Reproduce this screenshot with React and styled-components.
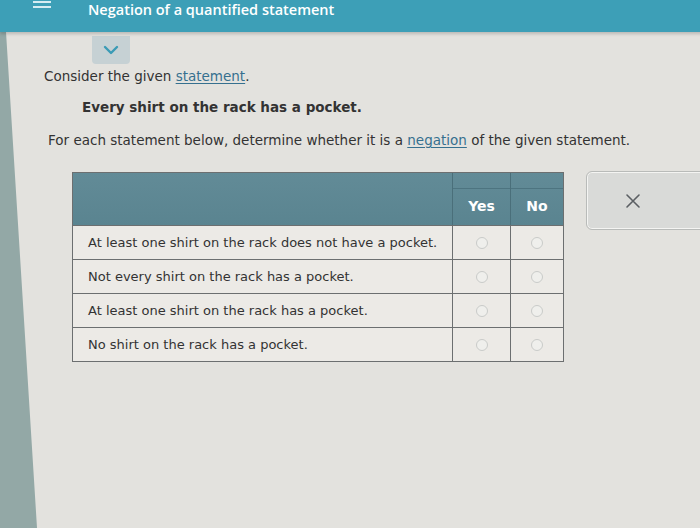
import React from "react";
import styled, { createGlobalStyle } from "styled-components";

const GlobalStyle = createGlobalStyle`
  html, body {
    margin: 0;
    padding: 0;
    background: #e3e2de;
  }
`;

const Page = styled.div`
  width: 700px;
  height: 528px;
  display: grid;
  grid-template-rows: 32px 1fr;
  background: #e3e2de;
  font-family: "DejaVu Sans", Verdana, sans-serif;
  color: #333;
  overflow: hidden;
`;

const Header = styled.div`
  display: flex;
  align-items: flex-start;
  background: #3d9fb7;
  box-shadow: 0 2px 3px rgba(0, 0, 0, 0.18);
  position: relative;
  z-index: 1;
`;

const Menu = styled.div`
  width: 18px;
  margin: 0 0 0 33px;
  display: flex;
  flex-direction: column;
  gap: 3px;
  padding-top: 1px;

  span {
    display: block;
    height: 2px;
    background: #d6edf3;
  }
`;

const Title = styled.h1`
  margin: 0 0 0 37px;
  font-family: "Open Sans", sans-serif;
  font-size: 14.5px;
  font-weight: 600;
  color: #fff;
  line-height: 20px;
`;

const Body = styled.div`
  display: flex;
`;

const Strip = styled.div`
  width: 38px;
  flex: none;
  background: #93a8a6;
  clip-path: polygon(0 0, 6px 0, 37px 100%, 0 100%);
`;

const Content = styled.div`
  flex: 1;
  padding-left: 6px;
`;

const Tab = styled.div`
  width: 38px;
  height: 28px;
  margin: 4px 0 0 48px;
  background: #c6d1d4;
  border-radius: 0 0 4px 4px;
  display: flex;
  align-items: center;
  justify-content: center;
`;

const Line = styled.p`
  margin: ${({ $top }) => $top || 0}px 0 0 ${({ $indent }) => $indent || 0}px;
  font-size: 13.5px;
  font-weight: ${({ $bold }) => ($bold ? 700 : 400)};
  line-height: 20px;
`;

const Link = styled.span`
  color: #36708f;
  text-decoration: underline;
  text-underline-offset: 2px;
`;

const Stack = styled.div`
  display: flex;
  flex-direction: column;
  gap: 11px;
  margin-top: 2px;
`;

const Work = styled.div`
  display: flex;
  align-items: flex-start;
  margin-top: 22px;
`;

const Table = styled.div`
  margin-left: 28px;
  display: grid;
  grid-template-columns: 380px 58px 52px;
  border: 1px solid #6c6f70;
  background: #eceae6;
`;

const HeadBlank = styled.div`
  height: 52px;
  background: linear-gradient(#628b97, #5a8490);
  border-right: 1px solid #4a6f7a;
`;

const HeadCell = styled.div`
  height: 52px;
  background: linear-gradient(#628b97, #5a8490);
  border-right: ${({ $last }) => ($last ? "none" : "1px solid #4a6f7a")};
  display: flex;
  flex-direction: column;
`;

const Cap = styled.div`
  height: 15px;
  border-bottom: 1px solid #4d7480;
`;

const HeadLabel = styled.div`
  flex: 1;
  display: flex;
  align-items: center;
  justify-content: center;
  color: #fff;
  font-weight: 700;
  font-size: 14px;
  padding-bottom: 3px;
`;

const Cell = styled.div`
  height: 33px;
  border-top: 1px solid #6c6f70;
  border-right: ${({ $last }) => ($last ? "none" : "1px solid #6c6f70")};
  display: flex;
  align-items: center;
  justify-content: ${({ $center }) => ($center ? "center" : "flex-start")};
  padding-left: ${({ $center }) => ($center ? 0 : 15)}px;
  font-size: 13px;
  color: #333;
`;

const Radio = styled.span`
  width: 10px;
  height: 10px;
  border-radius: 50%;
  border: 1px solid #c9cbc9;
  background: #efefec;
`;

const CloseBox = styled.div`
  margin-left: 23px;
  width: 130px;
  height: 57px;
  border: 1px solid #f4f4f2;
  outline: 1px solid #b9bbb9;
  border-radius: 5px;
  background: #d9dad8;
  display: flex;
  align-items: center;
  padding-left: 37px;
  box-sizing: border-box;
`;

const rows = [
  "At least one shirt on the rack does not have a pocket.",
  "Not every shirt on the rack has a pocket.",
  "At least one shirt on the rack has a pocket.",
  "No shirt on the rack has a pocket.",
];

const App = () => {
  return (
    <Page>
      <GlobalStyle />
      <Header>
        <Menu>
          <span />
          <span />
        </Menu>
        <Title>Negation of a quantified statement</Title>
      </Header>
      <Body>
        <Strip />
        <Content>
          <Tab>
            <svg width="16" height="10" viewBox="0 0 16 10">
              <path d="M2 2l6 6 6-6" fill="none" stroke="#3a9bb6" strokeWidth="2.4" strokeLinecap="round" strokeLinejoin="round" />
            </svg>
          </Tab>
          <Stack>
            <Line>
              Consider the given <Link>statement</Link>.
            </Line>
            <Line $indent={38} $bold>
              Every shirt on the rack has a pocket.
            </Line>
            <Line $indent={4} $top={2}>
              For each statement below, determine whether it is a <Link>negation</Link> of the given statement.
            </Line>
          </Stack>
          <Work>
            <Table>
              <HeadBlank />
              <HeadCell>
                <Cap />
                <HeadLabel>Yes</HeadLabel>
              </HeadCell>
              <HeadCell $last>
                <Cap />
                <HeadLabel>No</HeadLabel>
              </HeadCell>
              {rows.map((r) => (
                <React.Fragment key={r}>
                  <Cell>{r}</Cell>
                  <Cell $center>
                    <Radio />
                  </Cell>
                  <Cell $center $last>
                    <Radio />
                  </Cell>
                </React.Fragment>
              ))}
            </Table>
            <CloseBox>
              <svg width="16" height="16" viewBox="0 0 16 16">
                <path d="M2 2l12 12M14 2L2 14" stroke="#5b5f63" strokeWidth="1.6" strokeLinecap="round" />
              </svg>
            </CloseBox>
          </Work>
        </Content>
      </Body>
    </Page>
  );
};

export default App;
